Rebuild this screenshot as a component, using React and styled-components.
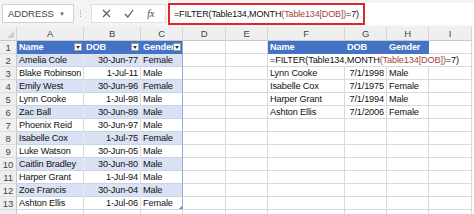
import React from "react";
import styled, { createGlobalStyle } from "styled-components";

const FONT = `"Liberation Sans", Arial, sans-serif`;

const GlobalStyle = createGlobalStyle`
  html, body {
    margin: 0;
    padding: 0;
    background: #fff;
  }
  body {
    font-family: ${FONT};
    overflow: hidden;
  }
`;

const leftRows = [
  ["Amelia Cole", "30-Jun-77", "Female"],
  ["Blake Robinson", "1-Jul-11", "Male"],
  ["Emily West", "30-Jun-96", "Female"],
  ["Lynn Cooke", "1-Jul-98", "Male"],
  ["Zac Ball", "30-Jun-89", "Male"],
  ["Phoenix Reid", "30-Jun-97", "Male"],
  ["Isabelle Cox", "1-Jul-75", "Female"],
  ["Luke Watson", "30-Jun-05", "Male"],
  ["Caitlin Bradley", "30-Jun-80", "Male"],
  ["Harper Grant", "1-Jul-94", "Male"],
  ["Zoe Francis", "30-Jun-04", "Male"],
  ["Ashton Ellis", "1-Jul-06", "Female"],
];

const rightRows = [
  ["Lynn Cooke", "7/1/1998", "Male"],
  ["Isabelle Cox", "7/1/1975", "Female"],
  ["Harper Grant", "7/1/1994", "Male"],
  ["Ashton Ellis", "7/1/2006", "Female"],
];

const columns = ["A", "B", "C", "D", "E", "F", "G", "H", "I"];

const Window = styled.div`
  width: 474px;
  height: 214px;
  display: flex;
  flex-direction: column;
  overflow: hidden;
  background: #fff;
`;

const FormulaBar = styled.div`
  height: 27px;
  flex: none;
  display: flex;
  align-items: center;
  background: #f4f4f4;
  padding: 0 0 0 2px;
  box-sizing: border-box;
`;

const NameBox = styled.div`
  width: 72px;
  height: 19px;
  box-sizing: border-box;
  border: 1px solid #d0d0d0;
  background: #fff;
  display: flex;
  align-items: center;
  justify-content: space-between;
  padding: 0 8px 0 5px;
  font-size: 9.5px;
  color: #444;
`;

const Caret = styled.span`
  font-size: 6px;
  color: #666;
`;

const Grip = styled.div`
  width: 1px;
  height: 7px;
  margin: 0 9px 0 6px;
  border-left: 1px dotted #a8a8a8;
`;

const FxGroup = styled.div`
  width: 75px;
  height: 19px;
  box-sizing: border-box;
  background: #fff;
  border: 1px solid #e0e0e0;
  display: flex;
  align-items: center;
  justify-content: space-around;
  padding: 0 4px;
  color: #555;
`;

const FxLabel = styled.span`
  font-family: "Liberation Serif", serif;
  font-style: italic;
  font-size: 10px;
  color: #444;
`;

const FormulaInput = styled.div`
  flex: 1;
  height: 22px;
  margin-left: 2px;
  background: #fff;
  display: flex;
  align-items: center;
`;

const Highlight = styled.div`
  width: 197px;
  height: 22px;
  box-sizing: border-box;
  border: 2px solid #e0262b;
  display: flex;
  align-items: center;
  padding-left: 4px;
  font-size: 9px;
  letter-spacing: -0.15px;
  color: #111;
  white-space: nowrap;
`;

const Ref = styled.span`
  color: #a3463c;
`;

const Sheet = styled.div`
  display: grid;
  grid-template-columns: 17px 67px 57px 42px 43px 42px 77px 42px 42px 43px;
  grid-template-rows: 14px;
  grid-auto-rows: 13px;
  font-size: 9.2px;
  letter-spacing: -0.15px;
`;

const Corner = styled.div`
  background: #efefef;
  border-right: 1px solid #d6d6d6;
  border-bottom: 1px solid #c8c8c8;
  display: flex;
  align-items: flex-end;
  justify-content: flex-end;
  padding: 0 2px 2px 0;
`;

const CornerMark = styled.div`
  width: 0;
  height: 0;
  border-left: 7px solid transparent;
  border-bottom: 7px solid #cfcfcf;
`;

const ColHead = styled.div`
  background: #efefef;
  border-right: 1px solid #d6d6d6;
  border-bottom: 1px solid #c8c8c8;
  color: #444;
  display: flex;
  align-items: center;
  justify-content: center;
  font-size: 9.5px;
`;

const RowHead = styled.div`
  background: #efefef;
  border-right: 1px solid #c8c8c8;
  border-bottom: 1px solid #dcdcdc;
  color: #444;
  display: flex;
  align-items: center;
  justify-content: center;
  font-size: 9.5px;
`;

const tones = {
  plain: { bg: "#fff", line: "#dadada", color: "#111" },
  band: { bg: "#d9e1f2", line: "#e6ecf6", color: "#111" },
  head: { bg: "#4472c4", line: "#4472c4", color: "#fff" },
};

const Cell = styled.div`
  position: relative;
  min-width: 0;
  background: ${({ $tone }) => tones[$tone].bg};
  color: ${({ $tone }) => tones[$tone].color};
  border-right: 1px solid
    ${({ $tone, $edge }) => ($edge ? "#8ea9db" : tones[$tone].line)};
  border-bottom: 1px solid
    ${({ $tone, $inTable }) => ($inTable ? "#c6d3ea" : tones[$tone].line)};
  font-weight: ${({ $tone }) => ($tone === "head" ? 700 : 400)};
  display: flex;
  align-items: center;
  justify-content: ${({ $align }) =>
    $align === "right" ? "flex-end" : "flex-start"};
  padding: 0 2px 0 2px;
  white-space: nowrap;
  overflow: ${({ $spill }) => ($spill ? "visible" : "hidden")};
  grid-column: ${({ $span }) => ($span ? `span ${$span}` : "auto")};
`;

const CellText = styled.span`
  flex: 1;
  min-width: 0;
  overflow: hidden;
  text-align: ${({ $align }) => ($align === "right" ? "right" : "left")};
`;

const FilterButton = styled.div`
  flex: none;
  width: 8px;
  height: 8px;
  box-sizing: border-box;
  background: #fff;
  border: 1px solid #9a9a9a;
  display: flex;
  align-items: center;
  justify-content: center;
  margin-right: -1px;
`;

const FilterArrow = styled.div`
  width: 0;
  height: 0;
  border-left: 2.5px solid transparent;
  border-right: 2.5px solid transparent;
  border-top: 3px solid #333;
`;

const ResizeHandle = styled.div`
  position: absolute;
  right: 0;
  bottom: 0;
  width: 0;
  height: 0;
  border-left: 3px solid transparent;
  border-bottom: 3px solid #5b7fc0;
`;

const HeadCell = ({ children, filter, ...rest }) => (
  <Cell $tone="head" {...rest}>
    <CellText>{children}</CellText>
    {filter && (
      <FilterButton>
        <FilterArrow />
      </FilterButton>
    )}
  </Cell>
);

const Formula = () => (
  <>
    =FILTER(Table134,MONTH<Ref>(Table134[DOB])</Ref>=7)
  </>
);

const buildRow = (r) => {
  const cells = [];
  // left table, columns A-C
  if (r === 1) {
    cells.push(
      <HeadCell key="a" filter>Name</HeadCell>,
      <HeadCell key="b" filter>DOB</HeadCell>,
      <HeadCell key="c" filter $edge>Gender</HeadCell>
    );
  } else if (r <= 13) {
    const [name, dob, gender] = leftRows[r - 2];
    const tone = r % 2 === 0 ? "band" : "plain";
    cells.push(
      <Cell key="a" $tone={tone} $inTable>
        <CellText>{name}</CellText>
      </Cell>,
      <Cell key="b" $tone={tone} $inTable $align="right">
        <CellText $align="right">{dob}</CellText>
      </Cell>,
      <Cell key="c" $tone={tone} $inTable $edge>
        <CellText>{gender}</CellText>
        {r === 13 && <ResizeHandle />}
      </Cell>
    );
  } else {
    cells.push(
      <Cell key="a" $tone="plain" />,
      <Cell key="b" $tone="plain" />,
      <Cell key="c" $tone="plain" />
    );
  }

  // D, E
  cells.push(<Cell key="d" $tone="plain" />, <Cell key="e" $tone="plain" />);

  // right table, columns F-I
  if (r === 1) {
    cells.push(
      <HeadCell key="f">Name</HeadCell>,
      <HeadCell key="g">DOB</HeadCell>,
      <HeadCell key="h">Gender</HeadCell>,
      <Cell key="i" $tone="plain" />
    );
  } else if (r === 2) {
    cells.push(
      <Cell key="f" $tone="plain" $span={4} $spill>
        <Formula />
      </Cell>
    );
  } else if (r <= 6) {
    const [name, dob, gender] = rightRows[r - 3];
    cells.push(
      <Cell key="f" $tone="plain">
        <CellText>{name}</CellText>
      </Cell>,
      <Cell key="g" $tone="plain" $align="right">
        <CellText $align="right">{dob}</CellText>
      </Cell>,
      <Cell key="h" $tone="plain">
        <CellText>{gender}</CellText>
      </Cell>,
      <Cell key="i" $tone="plain" />
    );
  } else {
    cells.push(
      <Cell key="f" $tone="plain" />,
      <Cell key="g" $tone="plain" />,
      <Cell key="h" $tone="plain" />,
      <Cell key="i" $tone="plain" />
    );
  }
  return cells;
};

const rowNumbers = Array.from({ length: 14 }, (_, i) => i + 1);

const App = () => {
  return (
    <Window>
      <GlobalStyle />
      <FormulaBar>
        <NameBox>
          ADDRESS
          <Caret>▼</Caret>
        </NameBox>
        <Grip />
        <FxGroup>
          <svg width="9" height="9" viewBox="0 0 9 9">
            <path d="M1 1 L8 8 M8 1 L1 8" stroke="#555" strokeWidth="1.1" />
          </svg>
          <svg width="10" height="9" viewBox="0 0 10 9">
            <path
              d="M1 5 L3.8 8 L9 1"
              stroke="#555"
              strokeWidth="1.2"
              fill="none"
            />
          </svg>
          <FxLabel>fx</FxLabel>
        </FxGroup>
        <FormulaInput>
          <Highlight>
            <Formula />
          </Highlight>
        </FormulaInput>
      </FormulaBar>
      <Sheet>
        <Corner>
          <CornerMark />
        </Corner>
        {columns.map((c) => (
          <ColHead key={c}>{c}</ColHead>
        ))}
        {rowNumbers.map((r) => (
          <React.Fragment key={r}>
            {/* the last row is only a sliver at the window edge */}
            <RowHead>{r < 14 ? r : ""}</RowHead>
            {buildRow(r)}
          </React.Fragment>
        ))}
      </Sheet>
    </Window>
  );
};

export default App;
